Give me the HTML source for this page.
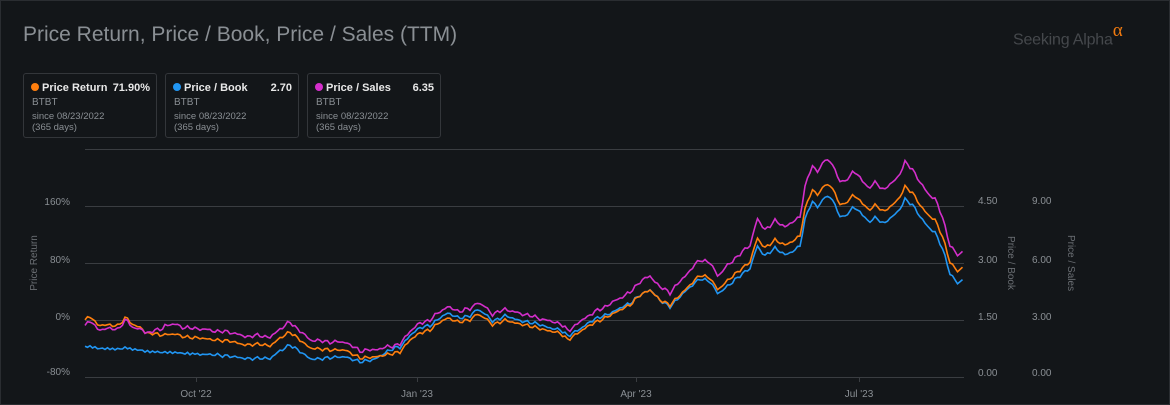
<!DOCTYPE html>
<html><head><meta charset="utf-8"><style>
html,body{margin:0;padding:0;background:#131619;}
body{width:1170px;height:405px;position:relative;overflow:hidden;font-family:"Liberation Sans",Arial,sans-serif;}
.frame{position:absolute;left:0;top:0;width:1168px;height:403px;border:1px solid #2a2d31;}
.title{position:absolute;left:23px;top:23px;font-size:21px;color:#8a8f94;}
.logo{position:absolute;left:1013px;top:22px;font-family:"Liberation Sans",sans-serif;font-size:16px;color:#45484c;letter-spacing:-0.2px;}
.logo sup{color:#f07a10;font-size:19px;position:relative;top:-2px;font-family:"Liberation Serif",serif;}
.card{position:absolute;top:73px;width:132px;height:63px;border:1px solid #33363a;border-radius:3px;color:#8a8f94;font-size:9px;}
.card .h{position:absolute;left:7px;top:8px;right:6px;font-size:11px;font-weight:bold;color:#e8e8e8;}
.card .h i{display:inline-block;width:8px;height:8px;border-radius:50%;margin-right:3px;vertical-align:-0px;}
.card .h b{position:absolute;right:0;top:0;}
.card .l1{position:absolute;left:8px;top:23px;font-size:10px;}
.card .l2{position:absolute;left:8px;top:37px;line-height:11px;font-size:9.5px;}
svg{position:absolute;left:0;top:0;}
</style></head><body>
<div class="frame"></div>
<div class="title">Price Return, Price / Book, Price / Sales (TTM)</div>
<div class="logo">Seeking Alpha<sup>α</sup></div>
<div class="card" style="left:23px"><div class="h"><i style="background:#ff7f0e"></i>Price Return<b>71.90%</b></div><div class="l1">BTBT</div><div class="l2">since 08/23/2022<br>(365 days)</div></div>
<div class="card" style="left:165px"><div class="h"><i style="background:#2196f3"></i>Price / Book<b>2.70</b></div><div class="l1">BTBT</div><div class="l2">since 08/23/2022<br>(365 days)</div></div>
<div class="card" style="left:307px"><div class="h"><i style="background:#d42ecb"></i>Price / Sales<b>6.35</b></div><div class="l1">BTBT</div><div class="l2">since 08/23/2022<br>(365 days)</div></div>
<svg width="1170" height="405" id="s">
<g stroke="#3a3d41" stroke-width="1">
<line x1="85" y1="149.5" x2="964" y2="149.5"/>
<line x1="85" y1="206.5" x2="964" y2="206.5"/>
<line x1="85" y1="263.5" x2="964" y2="263.5"/>
<line x1="85" y1="320.5" x2="964" y2="320.5"/>
<line x1="85" y1="377.5" x2="964" y2="377.5"/>
<line x1="196.5" y1="377" x2="196.5" y2="382"/>
<line x1="417.5" y1="377" x2="417.5" y2="382"/>
<line x1="636.5" y1="377" x2="636.5" y2="382"/>
<line x1="859.5" y1="377" x2="859.5" y2="382"/>
</g>
<g fill="#8a8f94" font-size="10" font-family="Liberation Sans, sans-serif">
<text x="70" y="205" text-anchor="end">160%</text>
<text x="70" y="263" text-anchor="end">80%</text>
<text x="70" y="320" text-anchor="end">0%</text>
<text x="70" y="375" text-anchor="end">-80%</text>
<text x="978" y="204">4.50</text><text x="978" y="263">3.00</text><text x="978" y="320">1.50</text><text x="978" y="376">0.00</text>
<text x="1032" y="204">9.00</text><text x="1032" y="263">6.00</text><text x="1032" y="320">3.00</text><text x="1032" y="376">0.00</text>
<text x="196" y="397" text-anchor="middle">Oct '22</text>
<text x="417" y="397" text-anchor="middle">Jan '23</text>
<text x="636" y="397" text-anchor="middle">Apr '23</text>
<text x="859" y="397" text-anchor="middle">Jul '23</text>
<text transform="translate(37,263) rotate(-90)" text-anchor="middle" fill="#6a6e73">Price Return</text>
<text transform="translate(1008,263) rotate(90)" text-anchor="middle" fill="#6a6e73">Price / Book</text>
<text transform="translate(1068,263) rotate(90)" text-anchor="middle" fill="#6a6e73">Price / Sales</text>
</g>
<polyline id="pb" fill="none" stroke="#2196f3" stroke-width="1.6"/>
<polyline id="pr" fill="none" stroke="#ff7f0e" stroke-width="1.6"/>
<polyline id="ps" fill="none" stroke="#d42ecb" stroke-width="1.6"/>
</svg>
<script>
var K=[[85,320],[91,316],[97,325],[110,325],[118,326],[126,317],[133,325],[142,328],[146,334],[152,333],[160,335],[175,334],[185,337],[200,338],[215,340],[230,341],[245,345],[260,344],[270,346],[280,338],[290,332],[300,340],[310,348],[330,350],[345,350],[360,358],[375,357],[385,355],[400,352],[410,340],[420,333],[430,330],[440,322],[448,318],[458,322],[470,320],[477,314],[485,318],[493,325],[505,320],[515,323],[530,326],[545,330],[560,333],[568,340],[575,335],[590,325],[605,318],[620,310],[630,305],[640,295],[650,290],[660,300],[670,305],[680,295],[690,285],[700,275],[710,278],[718,290],[728,280],[740,270],[750,262],[757,238],[765,248],[775,240],[785,245],[795,240],[800,235],[806,205],[812,190],[818,195],[824,185],[832,186],[838,202],[845,205],[852,195],[860,200],[868,210],[876,205],[884,212],[892,205],[898,200],[905,187],[912,192],[920,205],[928,215],[935,220],[942,235],[950,262],[958,272],[964,265]];
var BD=[[85,27],[170,17],[300,12],[370,3],[395,-5],[600,-3],[700,3],[820,12],[964,12]];
var MD=[[85,5],[140,2],[165,-7]];
function interp(A,x){for(var i=1;i<A.length;i++){if(x<=A[i][0]){var a=A[i-1],b=A[i],t=(x-a[0])/(b[0]-a[0]);return a[1]+t*(b[1]-a[1]);}}return A[A.length-1][1];}
var pr=[],pb=[],ps=[];
for(var x=85;x<=964;x+=2.5){var y=interp(K,x)+1.0*Math.sin(x*1.7)+0.8*Math.sin(x*0.63);
pr.push(x+","+y.toFixed(1));
var b=y+interp(BD,x)+0.5*Math.sin(x*2.3);
if(x<200){b=347+(x-85)*0.03+1.0*Math.sin(x*1.1)+(y-320)*0.2;}
pb.push(x+","+b.toFixed(1));
var d=x<165?interp(MD,x):-(Math.max(7,5+(380-y)*0.1));
var s=y+d+0.5*Math.sin(x*2.9);
ps.push(x+","+s.toFixed(1));}
document.getElementById("pr").setAttribute("points",pr.join(" "));
document.getElementById("pb").setAttribute("points",pb.join(" "));
document.getElementById("ps").setAttribute("points",ps.join(" "));
</script>
</body></html>
